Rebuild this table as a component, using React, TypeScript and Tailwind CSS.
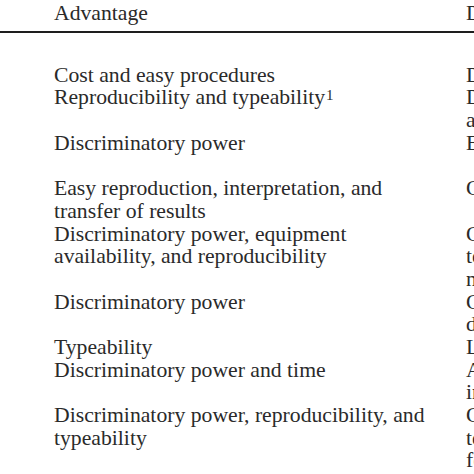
const rows: { left: string[]; right: string[] }[] = [
  { left: ["Cost and easy procedures"], right: ["Difficult standardization"] },
  {
    left: ["Reproducibility and typeability|1"],
    right: ["Does not discriminate", "among closely related strains"],
  },
  { left: ["Discriminatory power", ""], right: ["Expensive equipment", ""] },
  {
    left: ["Easy reproduction, interpretation, and", "transfer of results"],
    right: ["Costly and labour intensive", ""],
  },
  {
    left: ["Discriminatory power, equipment", "availability, and reproducibility"],
    right: ["Complex interpretation,", "technically demanding,", "not standardized"],
  },
  {
    left: ["Discriminatory power", ""],
    right: ["Costly and labour intensive,", "difficult to interpret"],
  },
  { left: ["Typeability"], right: ["Low discriminatory power"] },
  {
    left: ["Discriminatory power and time", ""],
    right: ["Analysis and", "interpretation are complex"],
  },
  {
    left: ["Discriminatory power, reproducibility, and", "typeability", ""],
    right: ["Costly equipment,", "technically demanding,", "few databases"],
  },
];

function Line({ text }: { text: string }) {
  if (!text) return <div className="h-[22.7px]" />;
  const [main, sup] = text.split("|");
  return (
    <div className="h-[22.7px] whitespace-nowrap">
      {main}
      {sup && (
        <span className="inline-block align-top text-[15px] leading-none mt-[2px] ml-[1px]">
          {sup}
        </span>
      )}
    </div>
  );
}

export default function App() {
  return (
    <div
      className="w-[474px] h-[474px] overflow-hidden bg-white text-[#2a2a2a] text-[21.7px] leading-[22.7px]"
      style={{ fontFamily: '"Liberation Serif", "Times New Roman", serif' }}
    >
      <div className="pt-[2px] pl-[54px] grid grid-cols-[412px_auto]">
        <div>Advantage</div>
        <div className="whitespace-nowrap">Disadvantage</div>
      </div>
      <div className="mt-[6px] h-[2px] w-[474px] bg-[#1e1e1e]" />
      <div className="mt-[31px] pl-[54px]">
        {rows.map((row, i) => (
          <div key={i} className="grid grid-cols-[412px_auto]">
            <div>
              {row.left.map((l, j) => (
                <Line key={j} text={l} />
              ))}
            </div>
            <div>
              {row.right.map((l, j) => (
                <Line key={j} text={l} />
              ))}
            </div>
          </div>
        ))}
      </div>
    </div>
  );
}
